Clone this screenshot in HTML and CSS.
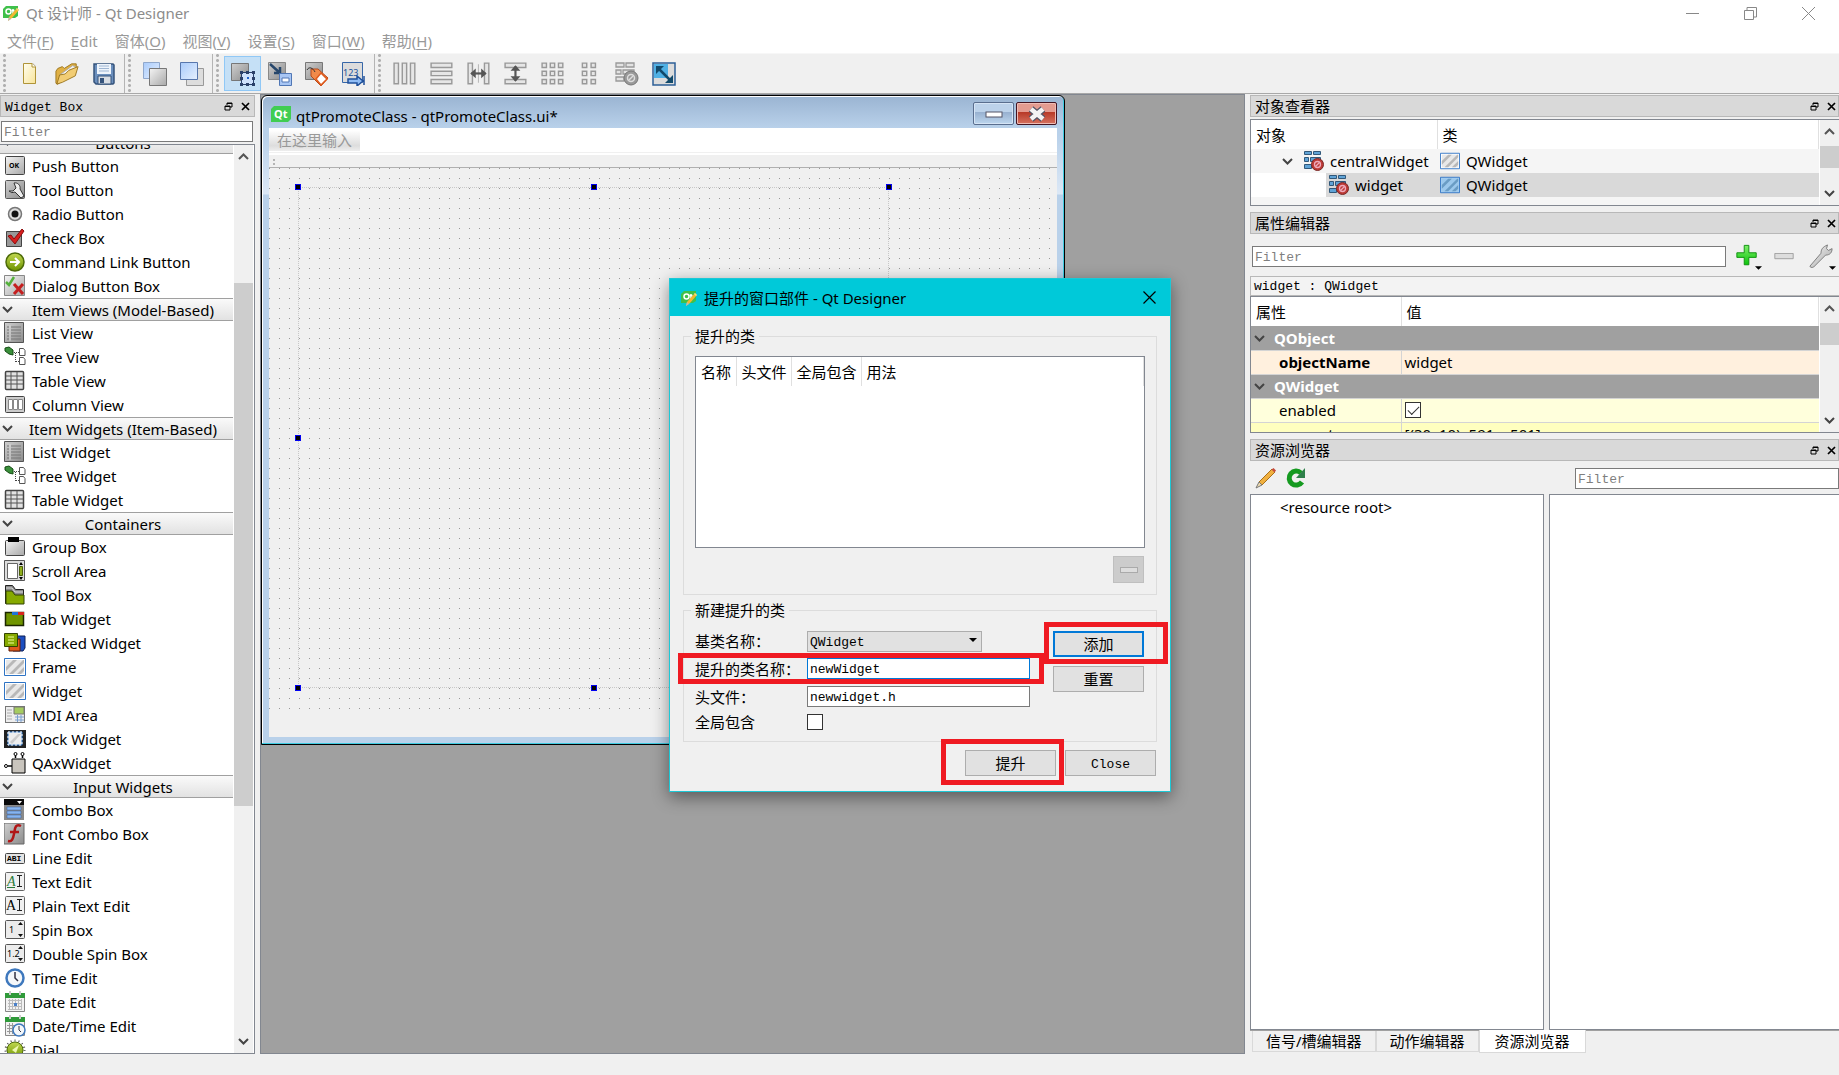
FILE: index.html
```html
<!DOCTYPE html>
<html lang="zh-CN">
<head>
<meta charset="utf-8">
<title>Qt 设计师 - Qt Designer</title>
<link rel="stylesheet" href="styles.css">
</head>
<body>
<svg class="defs" aria-hidden="true">
  <defs>
    <linearGradient id="g-grey" x1="0" y1="0" x2="1" y2="1"><stop offset="0" stop-color="#f4f4f4"/><stop offset="1" stop-color="#a8a8a8"/></linearGradient>
    <linearGradient id="g-mid" x1="0" y1="0" x2="1" y2="1"><stop offset="0" stop-color="#cfcfcf"/><stop offset="1" stop-color="#8c8c8c"/></linearGradient>
    <linearGradient id="g-blue" x1="0" y1="0" x2="1" y2="1"><stop offset="0" stop-color="#a9cbfb"/><stop offset="1" stop-color="#e6f0fe"/></linearGradient>
    <linearGradient id="g-yellow" x1="0" y1="0" x2="1" y2="1"><stop offset="0" stop-color="#fffef0"/><stop offset="1" stop-color="#f8e49a"/></linearGradient>
    <linearGradient id="g-green" x1="0" y1="0" x2="0" y2="1"><stop offset="0" stop-color="#7fef6a"/><stop offset="1" stop-color="#0cc40c"/></linearGradient>
    <linearGradient id="g-olive" x1="0" y1="0" x2="0" y2="1"><stop offset="0" stop-color="#c2d850"/><stop offset="1" stop-color="#6d9400"/></linearGradient>
  </defs>
  <symbol id="i-logo" viewBox="0 0 16 16"><path d="M3 1h12v10l-3 2H0V4z" fill="#3fc04a"/><circle cx="5.500" cy="6.500" r="2.500" fill="none" stroke="#fff" stroke-width="1.500"/><path d="M10 4v5M8.500 5.500h3" stroke="#fff" stroke-width="1.500"/><path d="M14 3l2 2-7 8-4 3 1-4z" fill="#f4b731"/><path d="M14 3l2 2-1 1-2-2z" fill="#e9e08a"/><path d="M6 12l2 2-3 2z" fill="#b9b9b9"/></symbol>
  <symbol id="i-float" viewBox="0 0 9 9"><path d="M3 1h5v4H6M3 1v2M3 1.500h5M1 4h5v4H1zM1 4.500h5" fill="none" stroke="#000"/></symbol>
  <symbol id="i-close" viewBox="0 0 9 9"><path d="M1 1l7 7M8 1L1 8" stroke="#000" stroke-width="1.700"/></symbol>
  <symbol id="i-down" viewBox="0 0 11 11"><path d="M1 3l4.500 4.500L10 3" fill="none" stroke="#444" stroke-width="2"/></symbol>
  <symbol id="i-up" viewBox="0 0 11 11"><path d="M1 8l4.500-4.500L10 8" fill="none" stroke="#555" stroke-width="2"/></symbol>

  <symbol id="i-new" viewBox="0 0 24 24"><path d="M6 1h9l3 3v18H6z" fill="#aaa" opacity=".5"/><path d="M5.500 1.500h8.500l3.500 3.500v16.500h-12z" fill="url(#g-yellow)" stroke="#b09438"/><path d="M14 1.500V5h3.500" fill="#fff" stroke="#b09438"/></symbol>
  <symbol id="i-open" viewBox="0 0 26 24"><path d="M1 9l2-3 5-2 2 2 8-5h5v6L7 20l-4 3-2-1z" fill="#e0b044" stroke="#9a741c"/><path d="M5 13L19 3l3 1v7L6 20z" fill="#f3f3f3" stroke="#aaa"/><path d="M2 23l3-10 6-1 4-4 10-4-3 10-14 7z" fill="#f2cd74" stroke="#9a741c"/></symbol>
  <symbol id="i-save" viewBox="0 0 24 24"><path d="M2 2h19l1 1v18l-1 1H4l-2-2z" fill="#6b8fbd" stroke="#35537b" stroke-width="1.500"/><path d="M5 2h14v10H5z" fill="#eef4fb"/><path d="M7 4h10M7 6.500h10M7 9h10" stroke="#9fb6d3"/><path d="M6 14h13v8H6z" fill="#d8dde3" stroke="#35537b"/><path d="M8 16h4v5H8z" fill="#35537b"/></symbol>
  <symbol id="i-back" viewBox="0 0 24 24"><path d="M.5.500h16v16H.5z" fill="url(#g-blue)" stroke="#90a8cc"/><path d="M6.500 6.500h17v17h-17z" fill="url(#g-grey)" stroke="#777"/></symbol>
  <symbol id="i-front" viewBox="0 0 24 24"><path d="M6.500 6.500h17v17h-17z" fill="#ddd" stroke="#999"/><path d="M.5.500h17v17H.5z" fill="url(#g-blue)" stroke="#5877ad"/></symbol>
  <symbol id="i-edit-widgets" viewBox="0 0 24 24"><path d="M.5 1.500h17v17H.5z" fill="url(#g-mid)" stroke="#777"/><path d="M10.500 10.500h12v12h-12z" fill="#cfe1fb" stroke="#2b4069"/><path d="M9 9h3v3H9zM15 9h3v3h-3zM21 9h3v3h-3zM9 15h3v3H9zM21 15h3v3h-3zM9 21h3v3H9zM15 21h3v3h-3zM21 21h3v3h-3z" fill="#2b4069"/><path d="M16 15h2v2h-2z" fill="#2563c9"/></symbol>
  <symbol id="i-signals" viewBox="0 0 24 24"><path d="M.5.500h17v17H.5z" fill="url(#g-mid)" stroke="#888"/><path d="M2 2l10 9M12 5v6H6" stroke="#27476b" stroke-width="2.500" fill="none"/><path d="M11.500 11.500h12v12h-12z" fill="#a8c6f4" stroke="#5077b5"/><path d="M14 16h7v4h-7z" fill="#fff" stroke="#5077b5"/></symbol>
  <symbol id="i-buddies" viewBox="0 0 24 24"><path d="M.5.500h17v17H.5z" fill="url(#g-mid)" stroke="#777"/><path d="M6 7h7l10 9-7 8L6 14z" fill="#f08a4a" stroke="#b5491a"/><path d="M16 11l6 6-6 6-5-6z" fill="#fff" stroke="#e05a1c" stroke-width="1.500"/><path d="M2 8c2-4 6-2 8 2" fill="none" stroke="#333"/></symbol>
  <symbol id="i-lh" viewBox="0 0 22 22"><path d="M1 1h4v19H1zM8.500 1h4v19h-4zM16 1h4v19h-4z" fill="#e6e6e6" stroke="#999" stroke-width="1.300"/></symbol>
  <symbol id="i-lv" viewBox="0 0 22 22"><path d="M1 1h19v4H1zM1 8.500h19v4H1zM1 16h19v4H1z" fill="#e6e6e6" stroke="#999" stroke-width="1.300"/></symbol>
  <symbol id="i-sh" viewBox="0 0 22 22"><path d="M1 1h4v19H1zM16 1h4v19h-4z" fill="#e6e6e6" stroke="#999" stroke-width="1.300"/><path d="M10.500 2v17" stroke="#bbb"/><path d="M4 10.500h13" stroke="#555" stroke-width="2"/><path d="M8 6v9l-5-4.500zM13 6v9l5-4.500z" fill="#555"/></symbol>
  <symbol id="i-sv" viewBox="0 0 22 22"><path d="M1 1h19v4H1zM1 16h19v4H1z" fill="#e6e6e6" stroke="#999" stroke-width="1.300"/><path d="M10.500 4v13" stroke="#555" stroke-width="2"/><path d="M6 8h9l-4.500-5zM6 13h9l-4.500 5z" fill="#555"/></symbol>
  <symbol id="i-grid" viewBox="0 0 22 22"><path d="M1 1h4v4H1zM8.500 1h4v4h-4zM16 1h4v4h-4zM1 8.500h4v4H1zM8.500 8.500h4v4h-4zM16 8.500h4v4h-4zM1 16h4v4H1zM8.500 16h4v4h-4zM16 16h4v4h-4z" fill="#e6e6e6" stroke="#999" stroke-width="1.300"/></symbol>
  <symbol id="i-form" viewBox="0 0 22 22"><path d="M4 1h4v4H4zM12 1h4v4h-4zM4 8.500h4v4H4zM12 8.500h4v4h-4zM4 16h4v4H4zM12 16h4v4h-4z" fill="#e6e6e6" stroke="#999" stroke-width="1.300"/></symbol>
  <symbol id="i-break" viewBox="0 0 24 24"><path d="M1 1h8v4H1zM11 1h8v4h-8zM1 8h5v4H1zM8 8h11v4H8zM1 15h8v4H1z" fill="#e2e2e2" stroke="#999" stroke-width="1.300"/><circle cx="16" cy="16" r="7" fill="#999" stroke="#777"/><circle cx="16" cy="16" r="3.500" fill="none" stroke="#ddd" stroke-width="1.500"/><path d="M14 18l4-4" stroke="#ddd" stroke-width="1.500"/></symbol>
  <symbol id="i-adjust" viewBox="0 0 24 24"><path d="M1 1h22v22H1z" fill="#dcdcdc" stroke="#2d5f97" stroke-width="1.500"/><path d="M2 2h14v14H2z" fill="#4fb0e4"/><path d="M6 6l12 12" stroke="#124a6b" stroke-width="2.500"/><path d="M4 4h8l-8 8zM21 21v-8l-8 8z" fill="#124a6b"/></symbol>

  <symbol id="i-tool" viewBox="0 0 22 22"><rect x="1.500" y="1.500" width="19" height="18" rx="1" fill="url(#g-mid)" stroke="#555"/><path d="M10 4a5 5 0 0 1 6 6l4 7-3 2-6-6a5 5 0 0 1-6-1l4 0 3-3z" fill="#eee" stroke="#333"/></symbol>
  <symbol id="i-radio" viewBox="0 0 22 22"><circle cx="11" cy="11" r="6.500" fill="#ddd" stroke="#777" stroke-width="1.500"/><circle cx="11" cy="11" r="3.500" fill="#111"/></symbol>
  <symbol id="i-check" viewBox="0 0 22 22"><path d="M2.500 4.500h15v15h-15z" fill="#999" stroke="#444"/><path d="M4 9l3-1 3 4 8-10 2 2-9 13z" fill="#d81f1f" stroke="#8b0e0e"/></symbol>
  <symbol id="i-link" viewBox="0 0 22 22"><circle cx="11" cy="11" r="9" fill="url(#g-olive)" stroke="#4d6b08" stroke-width="1.500"/><path d="M6 11h9M11 7l4 4-4 4" fill="none" stroke="#fff" stroke-width="2"/></symbol>
  <symbol id="i-dbox" viewBox="0 0 22 22"><path d="M.5.500h20v20H.5z" fill="url(#g-grey)" stroke="#888"/><path d="M2 7l3 3 5-8" fill="none" stroke="#55b13c" stroke-width="2.500"/><path d="M10 9l9 10M19 9l-9 10" stroke="#c41f1f" stroke-width="3"/></symbol>
  <symbol id="i-list" viewBox="0 0 22 22"><path d="M.5.500h19v20H.5z" fill="url(#g-mid)" stroke="#555"/><path d="M6 3v16" stroke="#eee" opacity=".6"/><path d="M3 5h2M7 5h10M3 8h2M7 8h10M3 11h2M7 11h10M3 14h2M7 14h10M3 17h2M7 17h10" stroke="#777"/></symbol>
  <symbol id="i-tree" viewBox="0 0 22 22"><path d="M1 2l4-1 4 3v5l-4-1-4-3z" fill="#3a8f3a" stroke="#144d14"/><path d="M10 6.500h5M11.500 7v9M12 15.500h3" stroke="#444" stroke-dasharray="1 1"/><path d="M15.500 2.500h4l1.500 2v5h-5.500zM15.500 11.500h4l1.500 2v5h-5.500z" fill="#fff" stroke="#555"/></symbol>
  <symbol id="i-table" viewBox="0 0 22 22"><rect x="1.500" y="1.500" width="18" height="18" rx="1" fill="#e2e2e2" stroke="#444" stroke-width="1.500"/><path d="M2 6h17M2 10h17M2 14h17M7 2v17M13 2v17" stroke="#555"/></symbol>
  <symbol id="i-column" viewBox="0 0 22 22"><rect x="1.500" y="2.500" width="19" height="16" rx="1" fill="#ccc" stroke="#444"/><path d="M4.500 5.500h4v10h-4zM9.500 5.500h4v10h-4zM14.500 5.500h4v10h-4z" fill="#fff" stroke="#888"/></symbol>
  <symbol id="i-group" viewBox="0 0 22 22"><rect x="1.500" y="4.500" width="19" height="15" rx="1" fill="url(#g-grey)" stroke="#444"/><path d="M4 1h11v5H4z" fill="#000"/></symbol>
  <symbol id="i-scroll" viewBox="0 0 22 22"><path d="M.5.500h20v20H.5z" fill="#ddd" stroke="#555"/><path d="M3.500 3.500h10v15h-10z" fill="#fff" stroke="#666"/><path d="M15.500 6.500h3v9h-3z" fill="#8fae1c" stroke="#4a5e08"/><path d="M15 5l2-3 2 3zM15 17l2 3 2-3z" fill="#000"/></symbol>
  <symbol id="i-toolbox" viewBox="0 0 22 22"><path d="M1.500 1.500h7l3 4h8v14h-18z" fill="#888" stroke="#222"/><path d="M2 7h6l3 4h9v9H2z" fill="#86a900" stroke="#334400"/><path d="M2 4h6l3 4h8" fill="none" stroke="#ddd"/></symbol>
  <symbol id="i-tab" viewBox="0 0 22 22"><path d="M1.500 4.500h18v13h-18z" fill="#6f9400" stroke="#1c2600" stroke-width="1.500"/><path d="M8 4h6v3H8z" fill="#1e74d8"/><path d="M14 4h6v3h-6z" fill="#d8261e"/></symbol>
  <symbol id="i-stack" viewBox="0 0 22 22"><path d="M9 4h12v12l-2 3H9z" fill="#1c4ec0" stroke="#0c1f55"/><path d="M5 7h11v12H5z" fill="#e05a1c" stroke="#601c04"/><path d="M.5 1.500h13v13H.5z" fill="#86a900" stroke="#334400"/><path d="M4 5h6M4 8h6M4 11h6" stroke="#f4ff9a"/></symbol>
  <symbol id="i-frame" viewBox="0 0 22 20"><path d="M.5 1.500h21v17H.5z" fill="#fff" stroke="#2f74c4"/><path d="M2 3h18v14H2z" fill="#e8e8e8"/><path d="M2 10l7-7h4L2 14zM5 17L19 3h1v3L9 17zM13 17l7-7v4l-3 3z" fill="#b8b8b8"/></symbol>
  <symbol id="i-frame-sel" viewBox="0 0 22 20"><path d="M.5 1.500h21v17H.5z" fill="#a4cdf0" stroke="#2f74c4"/><path d="M2 3h18v14H2z" fill="#9cc8ec"/><path d="M2 10l7-7h4L2 14zM5 17L19 3h1v3L9 17zM13 17l7-7v4l-3 3z" fill="#6a9cc4"/></symbol>
  <symbol id="i-mdi" viewBox="0 0 22 22"><rect x="1.500" y="2.500" width="19" height="16" fill="#eee" stroke="#777"/><path d="M10 3h10v7H10z" fill="#a5cc60" stroke="#777"/><path d="M3 6h5M3 9h5M3 12h5M3 15h5" stroke="#aaa"/><path d="M11 13h9M11 16h9M13.500 11v7M17 11v7" stroke="#7aa0d0"/></symbol>
  <symbol id="i-dock" viewBox="0 0 22 20"><path d="M0 1h22v18H0z" fill="#222"/><path d="M4 3h14v13H4z" fill="#eee" stroke="#2f74c4"/><path d="M4 3h14v13H4z" fill="none" stroke="#fff" stroke-dasharray="2 2"/><path d="M6 13l8-8h3L8 15z" fill="#ccc"/></symbol>
  <symbol id="i-qax" viewBox="0 0 22 22"><path d="M8 7h13v14H8z" fill="#c9c5be" stroke="#000"/><path d="M11.500 6V2M18.500 6V2M8 14H4" stroke="#000" stroke-width="1.500"/><circle cx="11.500" cy="2" r="1.500" fill="#fff" stroke="#000"/><circle cx="18.500" cy="2" r="1.500" fill="#fff" stroke="#000"/><circle cx="2" cy="14" r="1.500" fill="#fff" stroke="#000"/></symbol>
  <symbol id="i-combo" viewBox="0 0 22 22"><path d="M0 6h20v15H0z" fill="#8a8a8a"/><path d="M0 0h20v6H0z" fill="#0a0a0a"/><path d="M13 2h5l-2.500 3z" fill="#fff"/><path d="M3 8h14v3H3zM3 12h14v3H3zM3 16h14v3H3z" fill="#86b4f0" stroke="#385f94" stroke-width=".5"/></symbol>
  <symbol id="i-font" viewBox="0 0 22 22"><path d="M0 0h20v21H0z" fill="url(#g-mid)" stroke="#666"/><path d="M17 3c-6-3-6 3-7 8s-2 8-6 7M6 9h9" fill="none" stroke="#b01616" stroke-width="2.500"/></symbol>
  <symbol id="i-time" viewBox="0 0 22 22"><circle cx="11" cy="11" r="8.500" fill="#f4f7fa" stroke="#3e78bd" stroke-width="2.500"/><path d="M11 5v6l3 3" fill="none" stroke="#334" stroke-width="1.500"/></symbol>
  <symbol id="i-date" viewBox="0 0 22 22"><path d="M1.500 2.500h19v18h-19z" fill="#f2f2f2" stroke="#888"/><path d="M1 2h20v5H1z" fill="#2f9a3a"/><path d="M6 0v4M16 0v4" stroke="#ccc" stroke-width="2"/><path d="M4 9.500h14M4 12.500h14M4 15.500h14M4 18.500h14M5.500 8v11M8.500 8v11M11.500 8v11M14.500 8v11M17.500 8v11" stroke="#bbb"/><path d="M10 12h3v3h-3z" fill="#4a80c8"/></symbol>
  <symbol id="i-datetime" viewBox="0 0 22 22"><path d="M1.500 2.500h19v18h-19z" fill="#f2f2f2" stroke="#888"/><path d="M1 2h20v5H1z" fill="#2f9a3a"/><path d="M6 0v4M16 0v4" stroke="#ccc" stroke-width="2"/><path d="M3 10.500h8M3 13.500h8M3 16.500h8M5.500 8v11M8.500 8v11" stroke="#999"/><circle cx="15" cy="15" r="6" fill="#f4f7fa" stroke="#3e78bd" stroke-width="1.500"/><path d="M15 11v4l2 2" fill="none" stroke="#334"/></symbol>
  <symbol id="i-dial" viewBox="0 0 22 22"><circle cx="11" cy="11" r="9.500" fill="none" stroke="#555" stroke-width="2" stroke-dasharray="1 3"/><circle cx="11" cy="11" r="8" fill="url(#g-olive)" stroke="#4d6b08"/><path d="M8 11l7-5-3 8z" fill="#eef7b0"/></symbol>

  <symbol id="i-nolayout" viewBox="0 0 20 22"><path d="M.5 1.500h7v3h-7zM9.500 1.500h7v3h-7zM.5 7.500h4v4h-4zM6.500 7.500h10v4h-10zM.5 14.500h7v4h-7z" fill="#5fa3d6" stroke="#31587a"/><circle cx="13.500" cy="14.500" r="6" fill="#bd3a36" stroke="#7a2826"/><circle cx="13.500" cy="14.500" r="3" fill="none" stroke="#eab" stroke-width="1.300"/><path d="M11.500 16.500l4-4" stroke="#eab" stroke-width="1.300"/></symbol>
  <symbol id="i-plus" viewBox="0 0 24 26"><path d="M9 1.500h5v8h8v5h-8v8H9v-8H1v-5h8z" fill="url(#g-green)" stroke="#0b8f0b"/></symbol>
  <symbol id="i-minus" viewBox="0 0 22 8"><path d="M.5.500h21v6H.5z" fill="#ddd" stroke="#999"/></symbol>
  <symbol id="i-wrench" viewBox="0 0 26 26"><path d="M1 24L13 10c0-3 1-6 5-8l2-1-1 4 2 2 4-2c0 4-2 7-7 7L5 25c-2 1-4 0-4-1z" fill="url(#g-grey)" stroke="#777"/></symbol>
  <symbol id="i-caret" viewBox="0 0 8 4"><path d="M0 0h8L4 4z" fill="#000"/></symbol>
  <symbol id="i-pencil" viewBox="0 0 22 22"><path d="M4 15L17 2l3 3L7 18z" fill="#f0b03f" stroke="#a9701a"/><path d="M16.500 2.500l2-1.500 2.500 2.500-1.500 2z" fill="#c44c3c"/><path d="M4 15l3 3-6 3z" fill="#f0dcb0" stroke="#777"/></symbol>
  <symbol id="i-reload" viewBox="0 0 22 22"><path d="M17 15a7 7 0 1 1-1-9" fill="none" stroke="#159a20" stroke-width="5"/><path d="M20 1v10H11z" fill="#2f7f4a"/></symbol>
</svg>

<header class="titlebar">
  <svg class="logo"><use href="#i-logo"/></svg>
  <h1>Qt 设计师 - Qt Designer</h1>
  <div class="window-buttons">
    <button type="button" aria-label="最小化"><svg viewBox="0 0 13 13"><path d="M0 6.500h13" stroke="#888"/></svg></button>
    <button type="button" aria-label="还原"><svg viewBox="0 0 13 13"><path d="M.5 3.500h9v9h-9zM3 3V.5h9.500V10H10" fill="none" stroke="#888"/></svg></button>
    <button type="button" aria-label="关闭"><svg viewBox="0 0 13 13"><path d="M0 0l13 13M13 0L0 13" stroke="#888"/></svg></button>
  </div>
</header>
<nav class="menubar">
  <button type="button">文件(<u>F</u>)</button>
  <button type="button"><u>E</u>dit</button>
  <button type="button">窗体(<u>O</u>)</button>
  <button type="button">视图(<u>V</u>)</button>
  <button type="button">设置(<u>S</u>)</button>
  <button type="button">窗口(<u>W</u>)</button>
  <button type="button">帮助(<u>H</u>)</button>
</nav>
<div class="toolbars">
  <div class="toolbar">
    <button type="button" aria-label="新建"><svg><use href="#i-new"/></svg></button>
    <button type="button" aria-label="打开"><svg><use href="#i-open"/></svg></button>
    <button type="button" aria-label="保存"><svg><use href="#i-save"/></svg></button>
  </div>
  <div class="toolbar">
    <button type="button" aria-label="置于后面"><svg><use href="#i-back"/></svg></button>
    <button type="button" aria-label="置于前面"><svg><use href="#i-front"/></svg></button>
  </div>
  <div class="toolbar">
    <button type="button" class="active" aria-label="编辑窗口部件"><svg><use href="#i-edit-widgets"/></svg></button>
    <button type="button" aria-label="编辑信号/槽"><svg><use href="#i-signals"/></svg></button>
    <button type="button" aria-label="编辑伙伴"><svg><use href="#i-buddies"/></svg></button>
    <button type="button" aria-label="编辑Tab顺序"><svg viewBox="0 0 24 24"><path d="M.5.500h20v20H.5z" fill="#dcdcdc" stroke="#3767a8"/><text x="1" y="14" class="t-num">123</text><path d="M6 17h9v-3l6 5-6 5v-3H6zM22 14v9" fill="#8fbcf5" stroke="#20509a" stroke-width="1.500"/></svg></button>
  </div>
  <div class="toolbar">
    <button type="button" aria-label="水平布局"><svg><use href="#i-lh"/></svg></button>
    <button type="button" aria-label="垂直布局"><svg><use href="#i-lv"/></svg></button>
    <button type="button" aria-label="水平分裂器布局"><svg><use href="#i-sh"/></svg></button>
    <button type="button" aria-label="垂直分裂器布局"><svg><use href="#i-sv"/></svg></button>
    <button type="button" aria-label="栅格布局"><svg><use href="#i-grid"/></svg></button>
    <button type="button" aria-label="窗体布局"><svg><use href="#i-form"/></svg></button>
    <button type="button" aria-label="打破布局"><svg><use href="#i-break"/></svg></button>
    <button type="button" aria-label="调整大小"><svg><use href="#i-adjust"/></svg></button>
  </div>
</div>

<main class="workspace">
  <aside class="widget-box">
    <div class="dock-title latin"><h2>Widget Box</h2><button type="button" aria-label="浮动"><svg><use href="#i-float"/></svg></button><button type="button" aria-label="关闭"><svg><use href="#i-close"/></svg></button></div>
    <input class="filter" type="text" placeholder="Filter" aria-label="Filter widgets">
    <div class="scroll-frame">
      <div class="scroll-view">
        <div class="categories">
          <h3><svg><use href="#i-down"/></svg><span>Buttons</span></h3>
          <ul>
            <li><svg viewBox="0 0 22 22"><rect x="1.500" y="1.500" width="19" height="18" rx="1" fill="url(#g-grey)" stroke="#444"/><text x="5" y="13" class="t-ok">OK</text></svg>Push Button</li>
            <li><svg><use href="#i-tool"/></svg>Tool Button</li>
            <li><svg><use href="#i-radio"/></svg>Radio Button</li>
            <li><svg><use href="#i-check"/></svg>Check Box</li>
            <li><svg><use href="#i-link"/></svg>Command Link Button</li>
            <li><svg><use href="#i-dbox"/></svg>Dialog Button Box</li>
          </ul>
          <h3><svg><use href="#i-down"/></svg><span>Item Views (Model-Based)</span></h3>
          <ul>
            <li><svg><use href="#i-list"/></svg>List View</li>
            <li><svg><use href="#i-tree"/></svg>Tree View</li>
            <li><svg><use href="#i-table"/></svg>Table View</li>
            <li><svg><use href="#i-column"/></svg>Column View</li>
          </ul>
          <h3><svg><use href="#i-down"/></svg><span>Item Widgets (Item-Based)</span></h3>
          <ul>
            <li><svg><use href="#i-list"/></svg>List Widget</li>
            <li><svg><use href="#i-tree"/></svg>Tree Widget</li>
            <li><svg><use href="#i-table"/></svg>Table Widget</li>
          </ul>
          <h3><svg><use href="#i-down"/></svg><span>Containers</span></h3>
          <ul>
            <li><svg><use href="#i-group"/></svg>Group Box</li>
            <li><svg><use href="#i-scroll"/></svg>Scroll Area</li>
            <li><svg><use href="#i-toolbox"/></svg>Tool Box</li>
            <li><svg><use href="#i-tab"/></svg>Tab Widget</li>
            <li><svg><use href="#i-stack"/></svg>Stacked Widget</li>
            <li><svg><use href="#i-frame"/></svg>Frame</li>
            <li><svg><use href="#i-frame"/></svg>Widget</li>
            <li><svg><use href="#i-mdi"/></svg>MDI Area</li>
            <li><svg><use href="#i-dock"/></svg>Dock Widget</li>
            <li><svg><use href="#i-qax"/></svg>QAxWidget</li>
          </ul>
          <h3><svg><use href="#i-down"/></svg><span>Input Widgets</span></h3>
          <ul>
            <li><svg><use href="#i-combo"/></svg>Combo Box</li>
            <li><svg><use href="#i-font"/></svg>Font Combo Box</li>
            <li><svg viewBox="0 0 22 22"><rect x="1.500" y="6.500" width="19" height="10" rx="1" fill="#e4e4e4" stroke="#444"/><text x="3" y="14" class="t-ab">ABI</text></svg>Line Edit</li>
            <li><svg viewBox="0 0 22 22"><rect x="1.500" y="1.500" width="19" height="18" rx="1" fill="#f0f0f0" stroke="#666"/><text x="3" y="15" class="t-serif t-green">A</text><path d="M3 16.500h8" stroke="#2a7a3a"/><path d="M13 4.500h5M15.500 5v10M13 15.500h5" stroke="#222"/></svg>Text Edit</li>
            <li><svg viewBox="0 0 22 22"><rect x="1.500" y="1.500" width="19" height="18" rx="1" fill="#f0f0f0" stroke="#666"/><text x="2" y="15" class="t-serif">A</text><path d="M13 4.500h5M15.500 5v10M13 15.500h5" stroke="#222"/></svg>Plain Text Edit</li>
            <li><svg viewBox="0 0 22 22"><rect x="1.500" y="1.500" width="19" height="18" rx="1" fill="#ececec" stroke="#555"/><text x="5" y="14" class="t-spin">1</text><path d="M14 6l2.500-3L19 6zM14 15l2.500 3 2.500-3z" fill="#111"/></svg>Spin Box</li>
            <li><svg viewBox="0 0 22 22"><rect x="1.500" y="1.500" width="19" height="18" rx="1" fill="#ececec" stroke="#555"/><text x="3" y="14" class="t-spin">1.2</text><path d="M14 6l2.500-3L19 6zM14 15l2.500 3 2.500-3z" fill="#111"/></svg>Double Spin Box</li>
            <li><svg><use href="#i-time"/></svg>Time Edit</li>
            <li><svg><use href="#i-date"/></svg>Date Edit</li>
            <li><svg><use href="#i-datetime"/></svg>Date/Time Edit</li>
            <li><svg><use href="#i-dial"/></svg>Dial</li>
          </ul>
        </div>
      </div>
      <div class="scrollbar tall"><svg><use href="#i-up"/></svg><span class="track"><span class="thumb"></span></span><svg><use href="#i-down"/></svg></div>
    </div>
  </aside>

  <section class="mdi">
    <div class="form-window">
      <div class="form-title">
        <svg class="qt" viewBox="0 0 20 16"><path d="M3 0h17v13l-3 3H0V3z" fill="#41cd52"/><text x="3" y="12" class="t-qt">Qt</text></svg>
        <h2>qtPromoteClass - qtPromoteClass.ui*</h2>
        <button type="button" class="win-min" aria-label="最小化"><svg viewBox="0 0 18 16"><rect x="1" y="6" width="16" height="5" fill="#fff" stroke="#556"/></svg></button>
        <button type="button" class="win-close" aria-label="关闭"><svg viewBox="0 0 18 16"><path d="M3 3l12 10M15 3L3 13" stroke="#556" stroke-width="7"/><path d="M3 3l12 10M15 3L3 13" stroke="#f4f4f4" stroke-width="4.500"/></svg></button>
      </div>
      <div class="form-body">
        <div class="form-menu"><span>在这里输入</span></div>
        <div class="form-toolbar"><i></i></div>
        <div class="form-grid">
          <div class="selected-widget">
            <i class="nw"></i><i class="n"></i><i class="ne"></i><i class="w"></i><i class="sw"></i><i class="s"></i>
          </div>
        </div>
        <div class="form-status"></div>
      </div>
    </div>
  </section>

  <aside class="side">
    <section class="inspector">
      <div class="dock-title"><h2>对象查看器</h2><button type="button" aria-label="浮动"><svg><use href="#i-float"/></svg></button><button type="button" aria-label="关闭"><svg><use href="#i-close"/></svg></button></div>
      <div class="table-frame object-frame">
        <div class="clip">
          <table class="objects">
            <thead><tr><th>对象</th><th>类</th></tr></thead>
            <tbody>
              <tr class="alt"><td><span class="node lvl1"><svg class="arrow"><use href="#i-down"/></svg><svg><use href="#i-nolayout"/></svg>centralWidget</span></td><td><span class="node"><svg><use href="#i-frame"/></svg>QWidget</span></td></tr>
              <tr class="current"><td><span class="node lvl2"><svg><use href="#i-nolayout"/></svg>widget</span></td><td><span class="node"><svg><use href="#i-frame-sel"/></svg>QWidget</span></td></tr>
              <tr class="alt last"><td><span class="node leaf">menuBar</span></td><td><span class="node">QMenuBar</span></td></tr>
            </tbody>
          </table>
        </div>
        <div class="scrollbar"><svg><use href="#i-up"/></svg><span class="track"><span class="thumb"></span></span><svg><use href="#i-down"/></svg></div>
      </div>
    </section>

    <section class="properties">
      <div class="dock-title"><h2>属性编辑器</h2><button type="button" aria-label="浮动"><svg><use href="#i-float"/></svg></button><button type="button" aria-label="关闭"><svg><use href="#i-close"/></svg></button></div>
      <div class="property-tools">
        <input class="filter" type="text" placeholder="Filter" aria-label="Filter properties">
        <button type="button" aria-label="添加属性"><svg class="big"><use href="#i-plus"/></svg><svg class="caret"><use href="#i-caret"/></svg></button>
        <button type="button" aria-label="删除属性"><svg class="minus"><use href="#i-minus"/></svg></button>
        <button type="button" aria-label="配置"><svg class="big"><use href="#i-wrench"/></svg><svg class="caret"><use href="#i-caret"/></svg></button>
      </div>
      <p class="object-label">widget : QWidget</p>
      <div class="table-frame property-frame">
        <div class="clip">
          <table class="props">
            <thead><tr><th>属性</th><th>值</th></tr></thead>
            <tbody>
              <tr class="group"><td colspan="2"><svg><use href="#i-down"/></svg>QObject</td></tr>
              <tr class="changed"><td>objectName</td><td>widget</td></tr>
              <tr class="group"><td colspan="2"><svg><use href="#i-down"/></svg>QWidget</td></tr>
              <tr class="plain"><td><label for="enabled">enabled</label></td><td><input id="enabled" type="checkbox" checked></td></tr>
              <tr class="odd"><td>geometry</td><td>[(30, 10), 591 x 501]</td></tr>
            </tbody>
          </table>
        </div>
        <div class="scrollbar"><svg><use href="#i-up"/></svg><span class="track"><span class="thumb"></span></span><svg><use href="#i-down"/></svg></div>
      </div>
    </section>

    <section class="resources">
      <div class="dock-title"><h2>资源浏览器</h2><button type="button" aria-label="浮动"><svg><use href="#i-float"/></svg></button><button type="button" aria-label="关闭"><svg><use href="#i-close"/></svg></button></div>
      <div class="resource-tools">
        <button type="button" aria-label="编辑资源"><svg><use href="#i-pencil"/></svg></button>
        <button type="button" aria-label="重新加载"><svg><use href="#i-reload"/></svg></button>
        <input class="filter" type="text" placeholder="Filter" aria-label="Filter resources">
      </div>
      <div class="resource-panes">
        <div class="pane">&lt;resource root&gt;</div>
        <div class="pane"></div>
      </div>
      <div class="tabs" role="tablist">
        <button type="button" role="tab">信号/槽编辑器</button>
        <button type="button" role="tab">动作编辑器</button>
        <button type="button" role="tab" aria-selected="true">资源浏览器</button>
      </div>
    </section>
  </aside>
</main>
<footer class="statusbar"></footer>

<form class="dialog" role="dialog" aria-labelledby="dialog-title">
  <div class="dialog-title">
    <svg class="logo"><use href="#i-logo"/></svg>
    <h2 id="dialog-title">提升的窗口部件 - Qt Designer</h2>
    <button type="button" aria-label="关闭"><svg viewBox="0 0 13 13"><path d="M.5.500l12 12M12.500.500l-12 12" stroke="#000" stroke-width="1.200"/></svg></button>
  </div>
  <div class="dialog-body">
    <fieldset>
      <legend>提升的类</legend>
      <div class="class-list">
        <table><thead><tr><th>名称</th><th>头文件</th><th>全局包含</th><th>用法</th></tr></thead></table>
      </div>
      <button type="button" class="remove" aria-label="删除" disabled><svg viewBox="0 0 18 6"><rect x=".5" y=".5" width="17" height="5" fill="#ddd" stroke="#aaa"/></svg></button>
    </fieldset>
    <fieldset class="new-class">
      <legend>新建提升的类</legend>
      <div class="fields">
        <label for="base">基类名称：</label>
        <div class="select-wrap"><select id="base"><option>QWidget</option></select><svg><use href="#i-caret"/></svg></div>
        <label for="promoted">提升的类名称：</label>
        <input id="promoted" class="focused" type="text" value="newWidget">
        <label for="header">头文件：</label>
        <input id="header" type="text" value="newwidget.h">
        <label for="global">全局包含</label>
        <input id="global" type="checkbox">
      </div>
      <div class="actions">
        <button type="button" class="push default">添加</button>
        <button type="button" class="push">重置</button>
      </div>
    </fieldset>
    <div class="dialog-footer">
      <button type="button" class="push">提升</button>
      <button type="button" class="push latin">Close</button>
    </div>
  </div>
  <span class="mark mark-add"></span>
  <span class="mark mark-name"></span>
  <span class="mark mark-promote"></span>
</form>
</body>
</html>
```
FILE: styles.css
```css
:root {
  --ui: "Noto Sans", "Noto Sans CJK SC", sans-serif;
  --song: "Liberation Mono", "Noto Sans CJK SC", monospace;
  --face: #f0f0f0;
  --line: #828790;
  --soft: #b8b8b8;
}

* { box-sizing: border-box; }

body {
  margin: 0;
  height: 100vh;
  overflow: hidden;
  display: flex;
  flex-direction: column;
  background: var(--face);
  color: #000;
  font: 15px/20px var(--ui);
}

h1, h2, h3, p, ul { margin: 0; padding: 0; font: inherit; list-style: none; }
button { margin: 0; padding: 0; border: 0; background: none; color: inherit; font: inherit; }
svg { display: block; flex: none; }
.defs { position: absolute; width: 0; height: 0; }
.latin { font-family: var(--song); font-size: 13px; }

.t-num { font: 9px var(--ui); fill: #20509a; }
.t-ok { font: bold 7px var(--ui); }
.t-ab { font: bold 8px var(--song); }
.t-serif { font: 14px "Liberation Serif", serif; }
.t-green { font-style: italic; fill: #2a7a3a; }
.t-spin { font: 9px var(--ui); }
.t-qt { font: bold 11px var(--ui); fill: #fff; }

/* Application title and menus */
.titlebar { display: flex; align-items: center; gap: 7px; height: 28px; padding: 0 2px 2px 3px; background: #fff; color: #8c8c8c; }
.logo { width: 16px; height: 16px; }
.window-buttons { display: flex; margin-left: auto; }
.window-buttons button { display: grid; place-items: center; width: 58px; height: 26px; }
.window-buttons svg { width: 13px; height: 13px; }
.menubar { display: flex; gap: 17px; height: 25px; padding: 2px 7px; background: #fff; color: #999; }
.menubar u { text-underline-offset: 2px; }

/* Tool bars */
.toolbars { display: flex; height: 41px; border-bottom: 1px solid #a8a8a8; border-top: 1px solid #f7f7f7; }
.toolbar { display: flex; align-items: center; padding: 0 2px 0 11px; border-right: 1px solid #b4b4b4; background: radial-gradient(circle, #b0b0b0 1px, transparent 2px) 3px 4px / 3px 5px repeat-y content-box; background-clip: border-box; background-origin: border-box; }
.toolbar:last-child { border-right: 0; }
.toolbar button { display: grid; place-items: center; width: 37px; height: 35px; border: 1px solid transparent; }
.toolbar button.active { background: #c5e0f6; border-color: #90c8f6; }
.toolbar svg { width: 24px; height: 24px; }

/* Docks */
.workspace { flex: 1; min-height: 0; display: flex; gap: 5px; }
.dock-title { flex: none; display: flex; align-items: center; gap: 8px; height: 22px; padding: 0 4px; border: 1px solid var(--soft); background: #d9d9d9; }
.dock-title h2 { flex: 1; }
.dock-title.latin h2 { padding-top: 3px; }
.dock-title svg { width: 9px; height: 9px; }
.filter, .fields input[type="text"] { height: 21px; min-width: 0; padding: 2px 2px 0; border: 1px solid #7a7a7a; border-radius: 0; outline: 0; background: #fff; color: #000; font: 13px/17px var(--song); }
.filter::placeholder { color: #7f7f7f; opacity: 1; }

.widget-box { flex: none; width: 255px; display: flex; flex-direction: column; padding-top: 1px; }
.widget-box .filter { margin: 4px 2px 2px 1px; }
.scroll-frame { flex: 1; min-height: 0; display: flex; border: 1px solid var(--line); border-left: 0; background: #fff; }
.scroll-view { flex: 1; min-width: 0; overflow: hidden; }
.categories { margin-top: -14px; }
.categories h3 { display: flex; align-items: center; height: 23px; padding-left: 2px; border: 1px solid #a0a0a0; border-width: 1px 0; background: linear-gradient(#fafafa, #e2e2e2); }
.categories h3 svg { width: 11px; height: 11px; }
.categories h3 span { flex: 1; text-align: center; }
.categories li { display: flex; align-items: center; gap: 6px; height: 24px; padding-left: 4px; }
.categories li svg { width: 22px; height: 22px; }

.scrollbar { flex: none; display: flex; flex-direction: column; align-items: center; width: 20px; padding: 6px 0; background: var(--face); border-left: 1px solid #fff; }
.scrollbar svg { width: 11px; height: 11px; }
.track { flex: 1; align-self: stretch; display: flex; flex-direction: column; padding-top: 9px; }
.thumb { height: 22px; background: #cdcdcd; }
.tall { width: 21px; border-right: 1px solid #fff; }
.tall .track { padding: 121px 0 230px; }
.tall .thumb { flex: 1; }

/* Form editor */
.mdi { flex: 1; min-width: 0; position: relative; overflow: hidden; border: 1px solid var(--line); background: #a0a0a0; }
.form-window { position: absolute; left: 0; top: 0; width: 804px; height: 650px; display: flex; flex-direction: column; border: 1px solid #000; border-radius: 6px 6px 0 0; padding: 0 7px 7px; background: linear-gradient(#9ab4d2, #b9d1ea 32px, #b9d1ea 40px, #dce8f6 98px, #b9d1ea 99px); box-shadow: inset -1px -1px #3ecbe0, inset 1px 1px #fff; }
.form-title { flex: none; display: flex; align-items: center; height: 32px; gap: 2px; padding: 6px 0 3px 2px; }
.form-title h2 { flex: 1; padding: 4px 0 0 3px; }
.qt { width: 20px; height: 16px; }
.form-title button { display: grid; place-items: center; width: 41px; height: 23px; border: 1px solid #5a6e8e; border-radius: 2px; box-shadow: inset 0 0 0 1px #d5e4f5; }
.form-title button svg { width: 18px; height: 16px; }
.win-min { background: linear-gradient(#bcd2ea 45%, #98b1d0 45%, #bdd6ee); }
.form-title .win-close { border-color: #431422; box-shadow: inset 0 0 0 1px #eebbb4; background: linear-gradient(#e39b90 45%, #b83a28 45%, #d57260); }
.form-body { flex: 1; display: flex; flex-direction: column; background: var(--face); }
.form-menu { height: 25px; padding: 2px 0; background: #fff; border-bottom: 1px solid #f0f0f0; color: #999; }
.form-menu span { display: inline-block; height: 21px; padding: 0 8px; background: linear-gradient(#fff, #ddd 75%, #eee); }
.form-toolbar { height: 15px; padding: 4px; border-top: 2px solid #fff; border-bottom: 1px solid #b0b0b0; }
.form-toolbar i { display: block; width: 2px; height: 6px; border: 2px solid #b4b4b4; border-width: 2px 0; }
.form-grid { flex: 1; padding: 19px 0 0 29px; background: conic-gradient(from 270deg at 1px 1px, #999 90deg, transparent 0) 0 0 / 10px 10px; }
.form-status { height: 27px; }
.selected-widget { position: relative; width: 591px; height: 501px; border: 1px dotted #c8c8c8; }
.selected-widget i { position: absolute; width: 6px; height: 6px; border: 1px solid #0000f0; background: #000; }
.nw, .n, .ne { top: -4px; }
.sw, .s { bottom: -4px; }
.nw, .w, .sw { left: -4px; }
.n, .s { left: calc(50% - 3px); }
.ne { right: -4px; }
.w { top: calc(50% - 3px); }

/* Right side docks */
.side { flex: none; width: 589px; display: flex; flex-direction: column; gap: 6px; padding-top: 1px; }
.side section { display: flex; flex-direction: column; }
.side .dock-title { padding-right: 2px; }
.table-frame { display: flex; border: 1px solid var(--line); border-right: 0; background: #fff; }
.clip { flex: 1; min-width: 0; overflow: hidden; }
.object-frame { height: 87px; margin-top: 2px; }
.property-frame { height: 137px; }
table { border-collapse: collapse; border-spacing: 0; table-layout: fixed; width: 100%; }
th { height: 29px; padding: 0 5px; border-right: 1px solid #e0e0e0; text-align: left; font-weight: normal; background: #fff; }
td { height: 24px; padding: 0; }
.objects th:first-child { width: 186px; }
.node { display: flex; align-items: center; gap: 6px; height: 24px; padding-left: 3px; white-space: nowrap; }
.node svg { width: 20px; height: 22px; }
.node .arrow { width: 11px; height: 11px; margin-right: 5px; }
.lvl1 { padding-left: 31px; }
.lvl2 { margin-left: 75px; padding-left: 3px; }
.leaf { padding-left: 56px; }
.last td { padding: 0; }
.last .node { height: 20px; }
.alt { background: #f5f5f5; }
.current .lvl2, .current td:last-child { background: #d9d9d9; }

.property-tools { display: flex; align-items: center; gap: 5px; height: 42px; padding: 2px 2px 0; }
.property-tools .filter { flex: 1; }
.property-tools button { position: relative; display: grid; place-items: center; width: 32px; height: 28px; }
.property-tools .big { width: 24px; height: 24px; }
.property-tools .minus { width: 22px; height: 7px; }
.property-tools .caret { position: absolute; right: 1px; bottom: 0; width: 7px; height: 4px; }
.object-label { height: 20px; padding: 0 3px; border: 1px solid var(--soft); border-right: 0; background: #f3f3f3; font: 13px/20px var(--song); }
.props th:first-child { width: 150px; }
.props td { border-bottom: 1px solid #d4d4d4; }
.props td + td { border-left: 1px solid #d4d4d4; padding-left: 3px; }
.props td:first-child { padding-left: 28px; }
.props .group td { padding-left: 3px; background: #a0a0a0; color: #fff; font-weight: bold; }
.group svg { display: inline-block; width: 11px; height: 11px; margin-right: 9px; }
.changed { background: #fff0de; }
.changed td:first-child { font-weight: bold; }
.plain { background: #ffffdc; }
.odd { background: #ffffbf; }
input[type="checkbox"] { appearance: none; display: block; width: 16px; height: 16px; margin: 0; border: 1px solid #333; background: #fff; }
input[type="checkbox"]:checked::after { content: ""; display: block; width: 10px; height: 5px; margin: 3px 2px; border: solid #333; border-width: 0 0 1px 1px; transform: rotate(-45deg); }

.side .resources { flex: 1; min-height: 0; }
.resource-tools { display: flex; align-items: center; gap: 8px; padding: 6px 0 5px 5px; }
.resource-tools svg { width: 22px; height: 22px; }
.resource-tools .filter { width: 264px; margin-left: auto; }
.resource-panes { flex: 1; display: grid; grid-template-columns: 294px 1fr; gap: 5px; border-bottom: 1px solid #a0a0a0; }
.pane { padding: 2px 29px; border: 1px solid var(--line); background: #fff; }
.pane:last-child { border-right: 0; }
.tabs { display: flex; align-items: flex-start; height: 23px; padding-left: 2px; }
.tabs button { height: 21px; padding: 0 13px; border: 1px solid #d9d9d9; border-top: 0; }
.tabs [aria-selected] { height: 23px; padding: 0 15px; margin-top: -1px; background: #fff; }
.statusbar { height: 21px; }

/* Promoted widgets dialog */
.dialog { position: absolute; left: 669px; top: 278px; width: 502px; margin: 0; border: 1px solid #1cc8d6; background: var(--face); box-shadow: 0 5px 16px rgba(0, 0, 0, .45); }
.dialog-title { display: flex; align-items: center; gap: 7px; height: 37px; padding: 0 14px 0 11px; background: #00c9d9; }
.dialog-title h2 { flex: 1; }
.dialog-title button svg { width: 13px; height: 13px; }
.dialog-body { padding: 10px 13px 15px; }
fieldset { min-width: 0; margin: 0; padding: 10px 11px 11px; border: 1px solid #dcdcdc; }
legend { margin-left: -4px; padding: 0 4px; line-height: 20px; }
.class-list { height: 192px; border: 1px solid var(--line); background: #fff; }
.class-list th:nth-child(1) { width: 40px; }
.class-list th:nth-child(2) { width: 55px; }
.class-list th:nth-child(3) { width: 70px; }
.class-list th { padding: 0 0 0 5px; }
.remove { display: grid; place-items: center; width: 31px; height: 27px; margin: 8px 1px 0 auto; border: 1px solid #bfbfbf; background: #ccc; }
.remove svg { width: 18px; height: 6px; }
.new-class { display: flex; gap: 23px; margin-top: 5px; }
.fields { flex: 1; display: grid; grid-template-columns: 112px 1fr; gap: 7px 0; align-items: center; }
.fields label:last-of-type { line-height: 16px; }
.select-wrap { position: relative; width: 175px; height: 21px; }
.select-wrap select { appearance: none; width: 100%; height: 21px; padding: 2px 2px 0; border: 1px solid #adadad; border-radius: 0; background: #e1e1e1; color: #000; font: 13px/17px var(--song); }
.select-wrap svg { position: absolute; right: 5px; top: 8px; width: 8px; height: 4px; }
.fields input.focused[type="text"] { border-color: #0078d7; }
.actions { display: flex; flex-direction: column; gap: 9px; padding: 1px 1px 0 0; }
.push { width: 91px; height: 26px; border: 1px solid #adadad; background: #e1e1e1; }
.push.latin { padding-top: 3px; }
.push.default { border: 2px solid #0078d7; }
.dialog-footer { display: flex; justify-content: flex-end; gap: 9px; margin-top: 8px; padding-right: 1px; }
.mark { position: absolute; border: 5px solid #ef1a22; pointer-events: none; }
.mark-add { left: 374px; top: 343px; width: 124px; height: 42px; }
.mark-name { left: 8px; top: 374px; width: 366px; height: 31px; }
.mark-promote { left: 271px; top: 460px; width: 123px; height: 46px; }
```
